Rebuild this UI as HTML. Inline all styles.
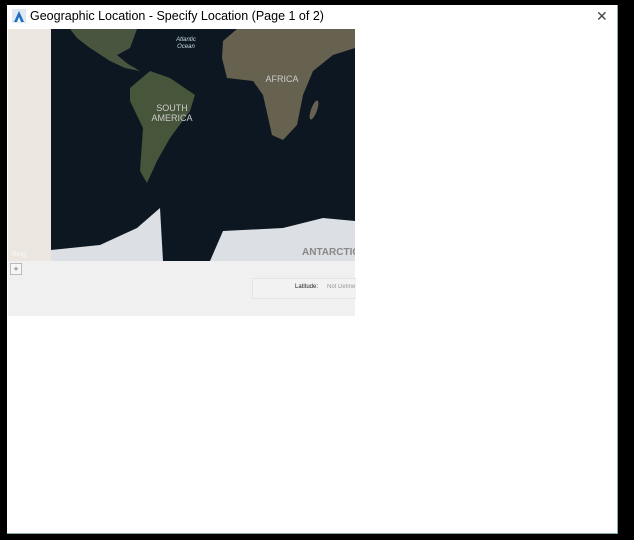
<!DOCTYPE html>
<html><head><style>
body{margin:0;width:634px;height:540px;background:#000;position:relative;overflow:hidden;font-family:"Liberation Sans",sans-serif}
.win{position:absolute;left:7px;top:5px;width:610px;height:528px;background:#fff;border-right:1px solid #8aa;border-bottom:1px solid #8aa}
.title{position:absolute;left:30px;top:9px;font-size:12.5px;color:#000}
.close{position:absolute;left:596px;top:8px;font-size:14px;color:#444;font-weight:300}
.panel{position:absolute;left:8px;top:261px;width:347px;height:55px;background:#f0f0f0}
.strip{position:absolute;left:8px;top:29px;width:43px;height:232px;background:#ebe7e0}
</style></head><body>
<div class="win"></div>
<svg style="position:absolute;left:12px;top:9px" width="14" height="14" viewBox="0 0 14 14"><rect width="14" height="14" fill="#dfe9f3"/><path d="M2 13 L7 2 L12 13 Z" fill="#1f6fbf"/><path d="M5 13 L7 8 L9 13Z" fill="#fff"/></svg>
<div class="title">Geographic Location - Specify Location (Page 1 of 2)</div>
<div class="close">✕</div>
<div class="strip"></div>
<svg style="position:absolute;left:0;top:0" width="634" height="540">
<defs><clipPath id="c"><rect x="51" y="29" width="304" height="232"/></clipPath></defs>
<g clip-path="url(#c)">
<rect x="51" y="29" width="304" height="232" fill="#0d1722"/>
<path d="M70 29 L137 29 L130 48 L117 55 L128 64 L140 71 L125 68 L110 61 L90 48 L77 38Z" fill="#4a5540"/>
<path d="M130 88 L150 71 L170 78 L195 95 L190 111 L170 138 L157 161 L147 183 L140 171 L143 128 L130 101Z" fill="#47553a"/>
<path d="M223 41 L237 29 L355 29 L355 48 L333 55 L313 71 L303 95 L297 125 L283 140 L272 135 L263 95 L253 81 L227 78 L222 58Z" fill="#676250"/>
<ellipse cx="314" cy="110" rx="3" ry="10" fill="#676250" transform="rotate(20 314 110)"/>
<path d="M210 261 L223 231 L283 228 L323 218 L355 221 L355 261Z" fill="#dcdfe3"/>
<path d="M51 250 L100 245 L137 228 L160 208 L163 261 L51 261Z" fill="#dcdfe3"/>
<text x="186" y="41" font-size="6" font-style="italic" fill="#cdd" text-anchor="middle">Atlantic</text>
<text x="186" y="48" font-size="6" font-style="italic" fill="#cdd" text-anchor="middle">Ocean</text>
<text x="172" y="111" font-size="9" fill="#ccc" text-anchor="middle">SOUTH</text>
<text x="172" y="121" font-size="9" fill="#ccc" text-anchor="middle">AMERICA</text>
<text x="282" y="82" font-size="9" fill="#ccc" text-anchor="middle">AFRICA</text>
<text x="302" y="255" font-size="10" font-weight="bold" fill="#888">ANTARCTICA</text>
</g>
<text x="12" y="256" font-size="7" fill="#fff" opacity=".7">Bing</text>
</svg>
<div class="panel">
<div style="position:absolute;left:2px;top:2px;width:10px;height:10px;border:1px solid #bbb;background:#f6f6f6;font-size:9px;line-height:10px;text-align:center;color:#666">+</div>
<div style="position:absolute;left:244px;top:17px;width:103px;height:19px;border:1px solid #e4e4e4;border-right:none;background:#f2f2f2"></div>
<div style="position:absolute;left:287px;top:23px;font-size:6px;color:#222">Latitude:</div>
<div style="position:absolute;left:319px;top:23px;font-size:6px;color:#999;white-space:nowrap;width:28px;overflow:hidden">Not Defined</div>
</div>
</body></html>
